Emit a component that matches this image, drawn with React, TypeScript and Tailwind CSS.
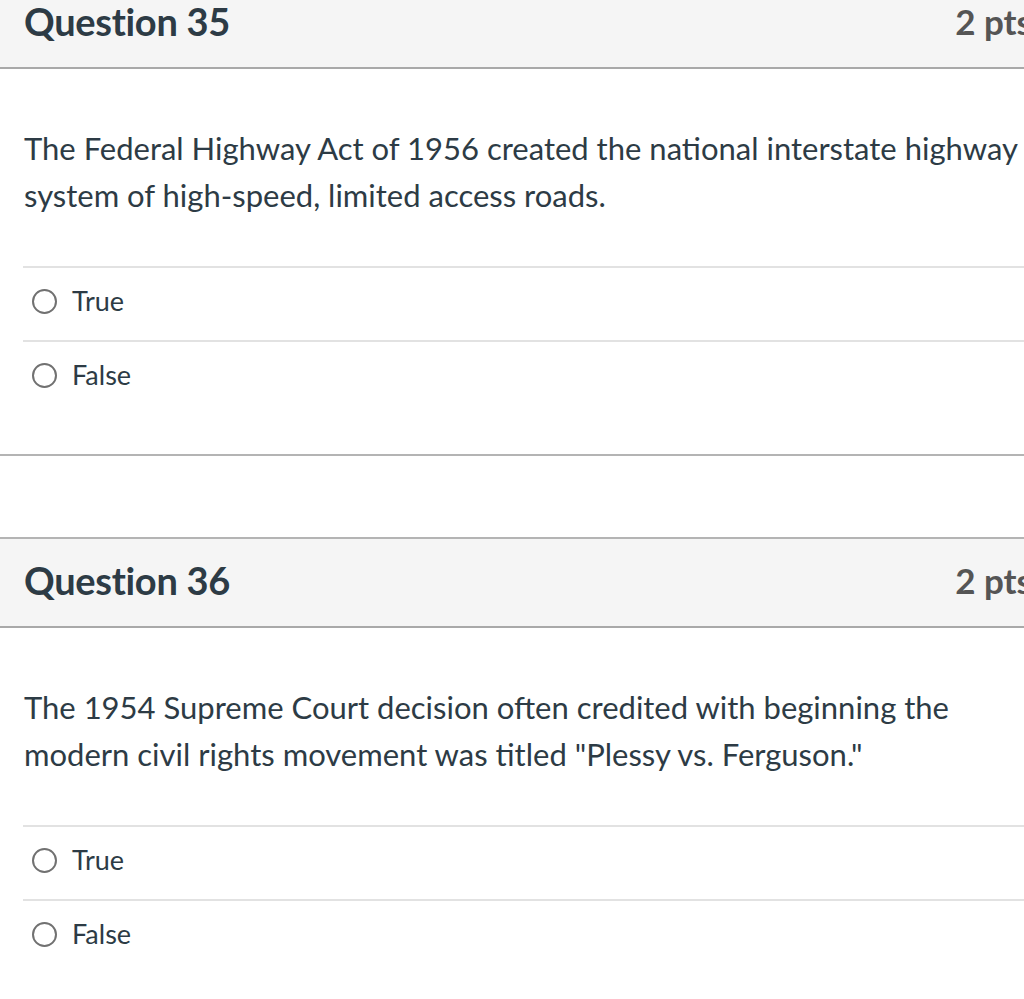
import React from "react";

type QuestionProps = {
  number: number;
  points: number;
  text: string;
  answers: string[];
  first?: boolean;
};

function Radio() {
  return (
    <span className="inline-block w-[25px] h-[25px] rounded-full border-2 border-[#717171] bg-white shrink-0" />
  );
}

function Question(props: QuestionProps) {
  const { number, points, text, answers, first } = props;

  return (
    <div
      className={
        "w-[1060px] ml-[-2px] border-2 border-[#b4b4b4] bg-white " +
        (first ? "mt-[-22px] mb-[81px]" : "mb-[81px]")
      }
    >
      <div className="h-[89px] bg-[#f5f5f5] border-b-2 border-[#a9a9a9] flex justify-between items-start px-[24px] pt-[20px]">
        <h2 className="text-[38px] font-bold leading-[43px] text-[#2d3b45] tracking-[-0.3px]">
          Question {number}
        </h2>
        <div className="text-[35px] font-bold leading-[43px] text-[#555555]">
          {points} pts
        </div>
      </div>

      <div className="pt-[56px] px-[24px]">
        <p className="text-[31px] leading-[47px] text-[#2d3b45]">{text}</p>
      </div>

      <div className="mt-[47px] ml-[23px] pb-[40px]">
        {answers.map((a) => (
          <div
            key={a}
            className="h-[74px] border-t-2 border-[#e2e2e2] flex items-center pl-[9px] pb-[6px] gap-[15px]"
          >
            <Radio />
            <span className="text-[27px] text-[#2d3b45] leading-[32px]">{a}</span>
          </div>
        ))}
      </div>
    </div>
  );
}

export default function App() {
  return (
    <div
      className="w-full h-[999px] overflow-hidden bg-white"
      style={{ fontFamily: "Lato, 'Liberation Sans', sans-serif" }}
    >
      <Question
        first
        number={35}
        points={2}
        text="The Federal Highway Act of 1956 created the national interstate highway system of high-speed, limited access roads."
        answers={["True", "False"]}
      />
      <Question
        number={36}
        points={2}
        text={'The 1954 Supreme Court decision often credited with beginning the modern civil rights movement was titled "Plessy vs. Ferguson."'}
        answers={["True", "False"]}
      />
    </div>
  );
}
